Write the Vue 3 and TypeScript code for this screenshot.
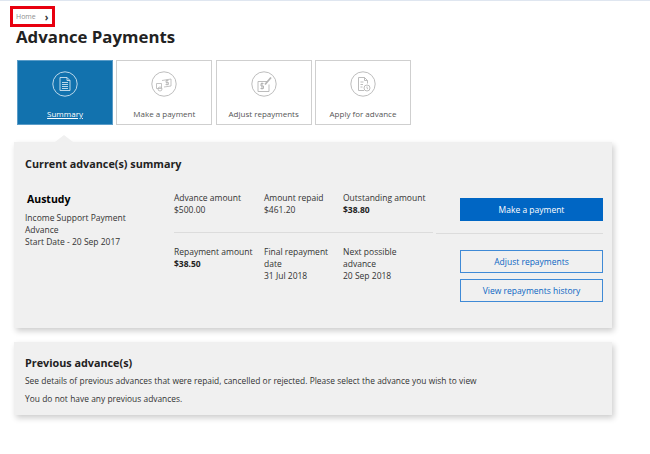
<script setup lang="ts">
interface Tab { label: string; icon: string; active?: boolean }
const tabs: Tab[] = [
  { label: 'Summary', icon: 'doc', active: true },
  { label: 'Make a payment', icon: 'pay' },
  { label: 'Adjust repayments', icon: 'adjust' },
  { label: 'Apply for advance', icon: 'apply' },
]
</script>

<template>
  <div class="page">
    <nav class="crumb"><span class="home">Home</span><span class="chev">›</span></nav>
    <h1>Advance Payments</h1>
    <div class="tabs">
      <a v-for="t in tabs" :key="t.label" class="tab" :class="{ active: t.active }">
        <svg class="icon" viewBox="0 0 26 26" width="26" height="26" fill="none" stroke="currentColor">
          <circle cx="13" cy="13" r="12.2" stroke-width="0.9" />
          <g v-if="t.icon === 'doc'" stroke-width="0.9">
            <path d="M8 6.500h7l3 3v10H8z" />
            <path d="M15 6.500v3h3M10 11.500h6M10 13.500h6M10 15.500h6M10 17.500h6" />
          </g>
          <g v-else-if="t.icon === 'pay'" stroke-width="0.8">
            <path d="M11 9.500l9-1.500v7l-7 1" />
            <path d="M5.500 12.500h5v5h-5z" />
            <circle cx="9" cy="18" r="2" />
            <path d="M17.500 9.500h-2.500v2h2.500v2H14.500M16 8.500v6" />
          </g>
          <g v-else-if="t.icon === 'adjust'" stroke-width="0.9">
            <path d="M16 10.500H7v10h11v-7" />
            <path d="M12.500 12.500H10v2.500h2.500v2.500H9.500M11 11.500v7" stroke-width="1" />
            <path d="M14 13.500L20 6.500" stroke-width="1.800" />
          </g>
          <g v-else stroke-width="0.9">
            <path d="M14 19.500H8.500v-13h6l3 3v3" />
            <path d="M14.500 6.500v3h3M10.500 11h3M10.500 13.500h2.500M10.500 16h2" />
            <circle cx="17" cy="17" r="3" />
            <path d="M17 15.500v1.800l1 .7" />
          </g>
        </svg>
        <span class="tab-label">{{ t.label }}</span>
      </a>
    </div>

    <section class="card current">
      <span class="pointer"></span>
      <h2>Current advance(s) summary</h2>
      <div class="body">
        <div class="product">
          <h3>Austudy</h3>
          <p>Income Support Payment Advance</p>
          <p>Start Date - 20 Sep 2017</p>
        </div>
        <div class="details">
          <div class="row first">
            <div class="c1"><div>Advance amount</div><div>$500.00</div></div>
            <div class="c2"><div>Amount repaid</div><div>$461.20</div></div>
            <div class="c3"><div>Outstanding amount</div><b>$38.80</b></div>
          </div>
          <div class="row second">
            <div class="c1"><div>Repayment amount</div><b>$38.50</b></div>
            <div class="c2"><div>Final repayment date</div><div>31 Jul 2018</div></div>
            <div class="c3"><div>Next possible advance</div><div>20 Sep 2018</div></div>
          </div>
        </div>
        <div class="actions">
          <a class="btn primary">Make a payment</a>
          <hr />
          <a class="btn">Adjust repayments</a>
          <a class="btn">View repayments history</a>
        </div>
      </div>
    </section>

    <section class="card previous">
      <h2>Previous advance(s)</h2>
      <p>See details of previous advances that were repaid, cancelled or rejected. Please select the advance you wish to view</p>
      <p>You do not have any previous advances.</p>
    </section>
  </div>
</template>

<style>
html, body { margin: 0; background: #fff; }
</style>

<style scoped>
.page {
  width: 650px;
  height: 454px;
  box-sizing: border-box;
  overflow: hidden;
  border-top: 1px solid #dfe6f0;
  font-family: "Open Sans", "Noto Sans", sans-serif;
  font-size: 8.500px;
  line-height: 12px;
  color: #333;
}
.crumb {
  box-sizing: border-box;
  width: 45px;
  height: 21px;
  margin: 5px 0 0 10px;
  border: 3px solid #e8000f;
  padding: 0 0 0 3px;
  display: flex;
  align-items: center;
  color: #8f8f8f;
  font-size: 7px;
}
.chev { margin-left: 9px; color: #333; font-weight: 700; font-size: 10px; }
h1 {
  margin: -1px 0 0 16px;
  height: 34px;
  font-size: 16.800px;
  line-height: 21px;
  font-weight: 700;
  color: #222;
}
.tabs { display: flex; gap: 3.330px; margin-left: 17px; }
.tab {
  box-sizing: border-box;
  width: 96px;
  height: 65px;
  border: 1px solid #cfcfcf;
  display: flex;
  flex-direction: column;
  align-items: center;
  color: #b5b5b5;
  background: #fff;
}
.icon { margin-top: 10px; }
.tab-label { margin-top: 11px; color: #555; font-size: 8px; }
.tab.active { background: #1272ae; border-color: #5a9cc8; color: #cfe3f0; }
.tab.active .tab-label { color: #fff; text-decoration: underline; }
.card {
  position: relative;
  margin-left: 14px;
  width: 598px;
  box-sizing: border-box;
  background: #f0f0f0;
  box-shadow: 2px 3px 6px rgba(0, 0, 0, 0.2);
}
.current { margin-top: 17px; height: 186px; padding: 14px 9px 0 11px; }
.pointer {
  position: absolute;
  left: 41px;
  top: -7px;
  border-left: 9px solid transparent;
  border-right: 9px solid transparent;
  border-bottom: 7px solid #f0f0f0;
}
h2 { margin: 0; color: #222; font-weight: 700; font-size: 10.800px; line-height: 15px; }
.body { display: flex; margin-top: 21px; }
.product { width: 149px; flex: none; padding-right: 40px; box-sizing: border-box; }
.product p { margin: 0; }
h3 {
  margin: 0 0 6px 2px;
  font-size: 10.500px;
  line-height: 14px;
  font-weight: 700;
  color: #000;
}
.details { width: 259px; flex: none; }
.row { display: flex; box-sizing: border-box; }
.row.first { height: 41px; border-bottom: 1px solid #dcdcdc; white-space: nowrap; }
.row.second { padding-top: 13px; }
.row b { color: #222; }
.c1 { width: 90px; flex: none; }
.c2 { width: 79px; flex: none; padding-right: 6px; box-sizing: border-box; }
.c3 { flex: 1; padding-right: 14px; box-sizing: border-box; }
.actions { width: 170px; margin-left: 3px; padding-top: 6px; display: flex; flex-direction: column; align-items: flex-end; }
.actions hr { width: 167px; height: 1px; margin: 12px 0 16px; border: 0; background: #dcdcdc; }
.btn {
  box-sizing: border-box;
  width: 143px;
  height: 23px;
  display: flex;
  align-items: center;
  justify-content: center;
  border: 1px solid #3f8ad6;
  color: #0b66c3;
}
.btn + .btn { margin-top: 6px; }
.btn.primary { background: #0066c4; border-color: #0066c4; color: #fff; }
.previous { margin-top: 14px; height: 73px; padding: 13px 11px 0; }
.previous h2 { margin-bottom: 5px; }
.previous p { margin: 0 0 6px; font-size: 8.400px; line-height: 12px; word-spacing: 0.15px; }
</style>
